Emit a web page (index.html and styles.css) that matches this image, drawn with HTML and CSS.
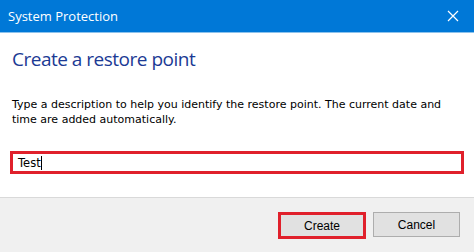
FILE: index.html
```html
<!DOCTYPE html>
<html lang="en">
<head>
  <meta charset="UTF-8">
  <meta name="viewport" content="width=device-width, initial-scale=1.0">
  <title>System Protection</title>
  <link rel="stylesheet" href="styles.css">
</head>
<body>
  <div class="dialog">
    <div class="titlebar">
      <span class="title">System Protection</span>
      <svg class="close" width="12" height="12" viewBox="0 0 12 12">
        <path d="M1 1L11 11M11 1L1 11" stroke="#fff" stroke-width="1.2" fill="none"/>
      </svg>
    </div>
    <div class="content">
      <h1>Create a restore point</h1>
      <p>Type a description to help you identify the restore point. The current date and time are added automatically.</p>
      <div class="field">Test<span class="caret"></span></div>
    </div>
    <div class="footer">
      <button class="btn create">Create</button>
      <button class="btn">Cancel</button>
    </div>
  </div>
</body>
</html>
```

FILE: styles.css
```css
* {
  box-sizing: border-box;
}
body {
  margin: 0;
  width: 474px;
  height: 252px;
  overflow: hidden;
  background: #fff;
}
.dialog {
  display: flex;
  flex-direction: column;
  height: 252px;
}
.titlebar {
  height: 33px;
  background: #0078d7;
  border-bottom: 1px solid #8cc2ec;
  display: flex;
  align-items: center;
  justify-content: space-between;
  padding: 0 15px 0 8px;
}
.title {
  font-family: "Open Sans", sans-serif;
  font-size: 13px;
  color: #fff;
}
.close {
  display: block;
}
.content {
  flex: 1;
  padding: 0 10px 0 12px;
  border-bottom: 1px solid #d9d9d9;
}
h1 {
  font-family: "Open Sans", sans-serif;
  font-weight: normal;
  font-size: 19px;
  letter-spacing: -0.5px;
  color: #1b3a94;
  margin: 13px 0 0;
}
p {
  font-family: "DejaVu Sans", sans-serif;
  font-size: 11px;
  line-height: 15px;
  color: #000;
  margin: 25px 0 0;
}
.field {
  margin: 24px 0 0 -2px;
  height: 23px;
  border: 3px solid #e0202b;
  font-family: "DejaVu Sans", sans-serif;
  font-size: 11.5px;
  padding: 0 5px;
  display: flex;
  align-items: center;
}
.caret {
  display: inline-block;
  width: 1px;
  height: 14px;
  background: #000;
}
.footer {
  height: 54px;
  background: #f0f0f0;
  display: flex;
  justify-content: flex-end;
  align-items: flex-start;
  gap: 7px;
  padding: 14px 14px 0 0;
}
.btn {
  width: 87px;
  height: 25px;
  background: #e1e1e1;
  border: 1px solid #adadad;
  font-family: "Liberation Sans", sans-serif;
  font-size: 12px;
  color: #000;
  padding: 0;
}
.btn.create {
  border: 3px solid #e0202b;
  height: 27px;
  width: 88px;
}
```
